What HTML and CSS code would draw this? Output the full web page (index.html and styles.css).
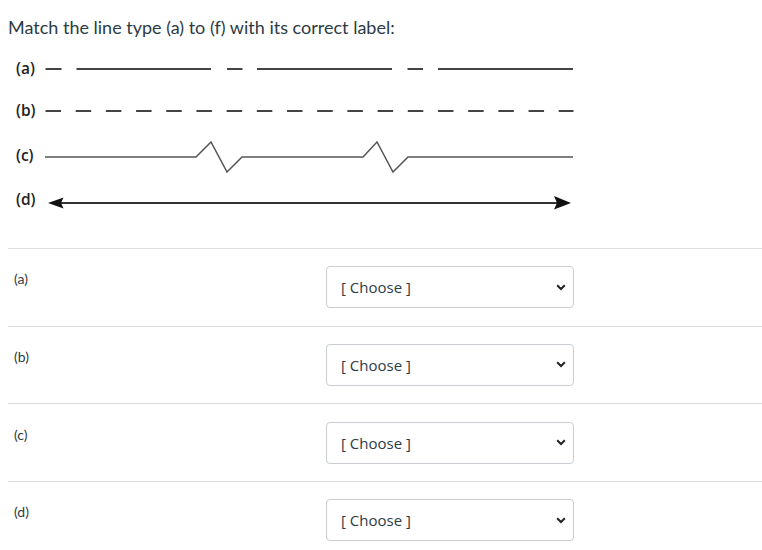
FILE: index.html
```html
<!DOCTYPE html>
<html>
<head>
<meta charset="utf-8">
<link rel="stylesheet" href="styles.css">
</head>
<body>
<div class="page">
  <p class="question">Match the line type (a) to (f) with its correct label:</p>
  <svg class="figure" width="580" height="170" viewBox="0 50 580 170" xmlns="http://www.w3.org/2000/svg">
    <g class="fig-label">
      <text x="16" y="74">(a)</text>
      <text x="16" y="116">(b)</text>
      <text x="16" y="161">(c)</text>
      <text x="16" y="205">(d)</text>
    </g>
    <g stroke="#444" stroke-width="2" fill="none">
      <line x1="45.5" y1="69" x2="61.5" y2="69"/>
      <line x1="76.5" y1="69" x2="211" y2="69"/>
      <line x1="227" y1="69" x2="242.5" y2="69"/>
      <line x1="257" y1="69" x2="392" y2="69"/>
      <line x1="407.5" y1="69" x2="423" y2="69"/>
      <line x1="438" y1="69" x2="573" y2="69"/>
      <line x1="45.5" y1="111" x2="573.5" y2="111" stroke-dasharray="15.5 14.69"/>
    </g>
    <polyline points="45,157 196,157 211,142 227,172 242,157 363,157 377,142 393,172 408,157 573,157" fill="none" stroke="#555" stroke-width="1.5" stroke-linejoin="miter"/>
    <line x1="60" y1="203" x2="557" y2="203" stroke="#333" stroke-width="2"/>
    <polygon points="48,203 63.5,197.5 61,203 63.5,208.5" fill="#111"/>
    <polygon points="571,203 554,196 557,203 554,209.5" fill="#111"/>
  </svg>
  <div class="answers">
    <div class="row">
      <div class="row-label">(a)</div>
      <div class="select"><span class="select-text">[ Choose ]</span>
        <svg class="chev" width="10" height="7" viewBox="0 0 10 7"><polyline points="1.2,1.3 5,5 8.8,1.3" fill="none" stroke="#222" stroke-width="2"/></svg>
      </div>
    </div>
    <div class="row">
      <div class="row-label">(b)</div>
      <div class="select"><span class="select-text">[ Choose ]</span>
        <svg class="chev" width="10" height="7" viewBox="0 0 10 7"><polyline points="1.2,1.3 5,5 8.8,1.3" fill="none" stroke="#222" stroke-width="2"/></svg>
      </div>
    </div>
    <div class="row">
      <div class="row-label">(c)</div>
      <div class="select"><span class="select-text">[ Choose ]</span>
        <svg class="chev" width="10" height="7" viewBox="0 0 10 7"><polyline points="1.2,1.3 5,5 8.8,1.3" fill="none" stroke="#222" stroke-width="2"/></svg>
      </div>
    </div>
    <div class="row">
      <div class="row-label">(d)</div>
      <div class="select"><span class="select-text">[ Choose ]</span>
        <svg class="chev" width="10" height="7" viewBox="0 0 10 7"><polyline points="1.2,1.3 5,5 8.8,1.3" fill="none" stroke="#222" stroke-width="2"/></svg>
      </div>
    </div>
  </div>
</div>
</body>
</html>
```

FILE: styles.css
```css
html, body {
  margin: 0;
  padding: 0;
  background: #ffffff;
}

body {
  font-family: Lato, "Liberation Sans", sans-serif;
  color: #2d3b45;
  overflow: hidden;
}

.page {
  padding-left: 8px;
}

.question {
  margin: 14px 0 9px 0;
  font-size: 18px;
  line-height: 27px;
}

.figure {
  display: block;
  margin-left: -8px;
}

.fig-label {
  font-family: "Open Sans", "Liberation Sans", sans-serif;
  font-weight: 600;
  font-size: 15.5px;
  fill: #222;
}

.answers {
  margin-top: 28px;
}

.row {
  display: flex;
  align-items: flex-start;
  border-top: 1px solid #dcdfe1;
  padding: 17.33px 0 17.34px 0;
}

.row-label {
  width: 312px;
  padding-left: 6px;
  padding-top: 2px;
  font-size: 14px;
  line-height: 21px;
}

.select {
  box-sizing: border-box;
  width: 248px;
  height: 42px;
  border: 1px solid #c7cdd1;
  border-radius: 4px;
  background: #fff;
  display: flex;
  align-items: center;
  justify-content: space-between;
  padding: 0 7px 0 14px;
}

.select-text {
  font-family: "Open Sans", "Liberation Sans", sans-serif;
  font-size: 15px;
  color: #2d3b45;
}

.chev {
  display: block;
}
```
